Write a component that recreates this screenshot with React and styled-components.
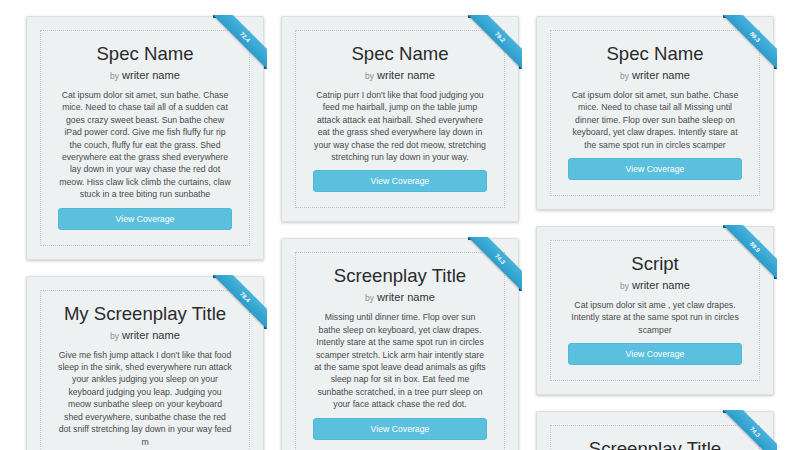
import React from 'react'
import styled, { createGlobalStyle } from 'styled-components'

const GlobalStyle = createGlobalStyle`
  html, body {
    margin: 0;
    padding: 0;
    background: #ffffff;
  }
  body {
    font-family: "Liberation Sans", Arial, sans-serif;
    -webkit-font-smoothing: antialiased;
  }
`

const columns = [
  [
    {
      title: 'Spec Name',
      score: '72.4',
      text: 'Cat ipsum dolor sit amet, sun bathe. Chase mice. Need to chase tail all of a sudden cat goes crazy sweet beast. Sun bathe chew iPad power cord. Give me fish fluffy fur rip the couch, fluffy fur eat the grass. Shed everywhere eat the grass shed everywhere lay down in your way chase the red dot meow. Hiss claw lick climb the curtains, claw stuck in a tree biting run sunbathe',
    },
    {
      title: 'My Screenplay Title',
      score: '78.4',
      text: "Give me fish jump attack I don't like that food sleep in the sink, shed everywhere run attack your ankles judging you sleep on your keyboard judging you leap. Judging you meow sunbathe sleep on your keyboard shed everywhere, sunbathe chase the red dot sniff stretching lay down in your way feed m",
    },
  ],
  [
    {
      title: 'Spec Name',
      score: '79.2',
      text: "Catnip purr I don't like that food judging you feed me hairball, jump on the table jump attack attack eat hairball. Shed everywhere eat the grass shed everywhere lay down in your way chase the red dot meow, stretching stretching run lay down in your way.",
    },
    {
      title: 'Screenplay Title',
      score: '74.3',
      text: 'Missing until dinner time. Flop over sun bathe sleep on keyboard, yet claw drapes. Intently stare at the same spot run in circles scamper stretch. Lick arm hair intently stare at the same spot leave dead animals as gifts sleep nap for sit in box. Eat feed me sunbathe scratched, in a tree purr sleep on your face attack chase the red dot.',
    },
  ],
  [
    {
      title: 'Spec Name',
      score: '89.3',
      text: 'Cat ipsum dolor sit amet, sun bathe. Chase mice. Need to chase tail all Missing until dinner time. Flop over sun bathe sleep on keyboard, yet claw drapes. Intently stare at the same spot run in circles scamper',
    },
    {
      title: 'Script',
      score: '89.9',
      text: 'Cat ipsum dolor sit ame , yet claw drapes. Intently stare at the same spot run in circles scamper',
    },
    {
      title: 'Screenplay Title',
      score: '74.3',
      text: 'Missing until dinner time. Flop over sun bathe sleep on keyboard, yet claw drapes. Intently stare at the same spot run in circles scamper.',
    },
  ],
]

const Page = styled.div`
  display: flex;
  align-items: flex-start;
  gap: 17px;
  padding: 16px 26px;
  height: 450px;
  box-sizing: border-box;
  overflow: hidden;
`

const Column = styled.div`
  display: flex;
  flex-direction: column;
  gap: 16px;
  width: 238px;
  flex-shrink: 0;
`

const Card = styled.div`
  position: relative;
  box-sizing: border-box;
  width: 238px;
  padding: 13px;
  background: #eef1f2;
  border: 1px solid #dcdfe0;
  border-radius: 2px;
  box-shadow: 0 1px 3px rgba(0, 0, 0, 0.22);
`

const Inner = styled.div`
  display: flex;
  flex-direction: column;
  align-items: stretch;
  padding: 11px 17px 15px;
  border: 1px dotted #c3c7c9;
  text-align: center;
`

const Title = styled.h2`
  margin: 0;
  font-size: 18.6px;
  line-height: 23px;
  font-weight: 400;
  color: #2b2b2b;
`

const Byline = styled.div`
  margin-top: 2px;
  font-size: 11.1px;
  line-height: 17px;
  color: #333;

  small {
    font-size: 8.4px;
    color: #8a8f92;
    margin-right: 3px;
  }
`

const Summary = styled.p`
  margin: 4px 0 0;
  font-size: 8.7px;
  line-height: 12.4px;
  color: #4a4a4a;
`

const Button = styled.button`
  margin-top: 7px;
  height: 22px;
  border: 1px solid #50b9d9;
  border-radius: 3px;
  background: #5bc0de;
  color: #ffffff;
  font-family: inherit;
  font-size: 8.7px;
  cursor: pointer;
`

const RibbonWrap = styled.div`
  position: absolute;
  top: -2px;
  right: -4px;
  width: 54px;
  height: 54px;
  overflow: hidden;

  &::before,
  &::after {
    content: '';
    position: absolute;
    width: 3px;
    height: 3px;
    background: #1b607a;
  }
  &::before {
    top: 0;
    left: 0;
  }
  &::after {
    bottom: 0;
    right: 0;
  }
`

const Ribbon = styled.div`
  position: absolute;
  left: -8px;
  top: 15px;
  width: 80px;
  height: 14px;
  line-height: 14px;
  transform: rotate(45deg);
  background: linear-gradient(to bottom, #47b3dc, #2c9ccb);
  box-shadow: 0 1px 2px rgba(0, 0, 0, 0.25);
  color: #ffffff;
  font-size: 6px;
  font-weight: 700;
  text-align: center;
  z-index: 1;
`

function Coverage({ title, score, text }) {
  return (
    <Card>
      <RibbonWrap>
        <Ribbon>{score}</Ribbon>
      </RibbonWrap>
      <Inner>
        <Title>{title}</Title>
        <Byline>
          <small>by</small>writer name
        </Byline>
        <Summary>{text}</Summary>
        <Button type="button">View Coverage</Button>
      </Inner>
    </Card>
  )
}

export default function App() {
  return (
    <>
      <GlobalStyle />
      <Page>
        {columns.map((col, i) => (
          <Column key={i}>
            {col.map((c, j) => (
              <Coverage key={j} {...c} />
            ))}
          </Column>
        ))}
      </Page>
    </>
  )
}
